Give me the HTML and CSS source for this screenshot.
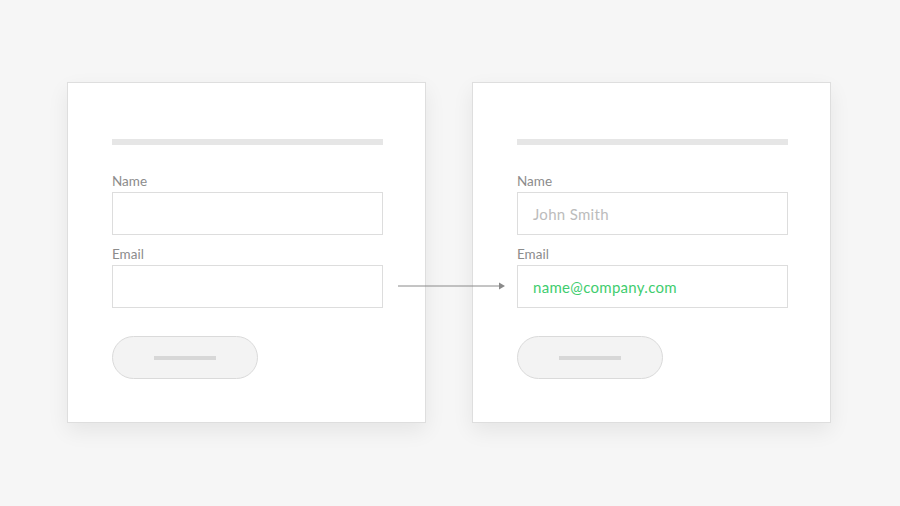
FILE: index.html
```html
<!DOCTYPE html>
<html lang="en">
<head>
    <meta charset="UTF-8">
    <title>Form fill</title>
    <link rel="stylesheet" href="styles.css">
</head>
<body>
    <div class="stage">
        <div class="card">
            <div class="title-bar"></div>
            <label class="field-label">Name</label>
            <div class="field"></div>
            <label class="field-label second">Email</label>
            <div class="field"></div>
            <div class="pill"><span></span></div>
        </div>

        <svg class="arrow" width="110" height="10" viewBox="0 0 110 10">
            <line x1="0" y1="5" x2="102" y2="5" stroke="#8a8a8a" stroke-width="1"/>
            <path d="M101 1.5 L107 5 L101 8.5 Z" fill="#8a8a8a"/>
        </svg>

        <div class="card">
            <div class="title-bar"></div>
            <label class="field-label">Name</label>
            <div class="field placeholder">John Smith</div>
            <label class="field-label second">Email</label>
            <div class="field filled">name@company.com</div>
            <div class="pill"><span></span></div>
        </div>
    </div>
</body>
</html>
```

FILE: styles.css
```css
body {
    margin: 0;
    background-color: #f6f6f6;
    font-family: 'Lato', 'Open Sans', sans-serif;
    height: 100vh;
    display: flex;
    justify-content: center;
    align-items: center;
}

.stage {
    position: relative;
    display: flex;
    gap: 46px;
    margin: 0 2px 1px 0;
}

.card {
    box-sizing: border-box;
    width: 359px;
    height: 341px;
    background-color: #ffffff;
    border: 1px solid #dedede;
    box-shadow: 0 8px 20px rgba(0, 0, 0, 0.07);
    padding: 56px 42px 0 44px;
    display: flex;
    flex-direction: column;
}

.title-bar {
    height: 6px;
    background-color: #e6e6e6;
    margin-bottom: 28px;
}

.field-label {
    font-size: 13.5px;
    line-height: 16px;
    color: #8c8c8c;
    margin-bottom: 3px;
}

.field-label.second {
    margin-top: 11px;
}

.field {
    box-sizing: border-box;
    height: 43px;
    border: 1px solid #dddddd;
    padding: 0 15px;
    display: flex;
    align-items: center;
    font-size: 15px;
    letter-spacing: 0.3px;
}

.field.placeholder {
    color: #bcbcbc;
}

.field.filled {
    color: #3fcd6e;
}

.pill {
    box-sizing: border-box;
    margin-top: 28px;
    width: 146px;
    height: 43px;
    border: 1px solid #dadada;
    border-radius: 22px;
    background-color: #f3f3f3;
    display: flex;
    justify-content: center;
    align-items: center;
}

.pill span {
    width: 62px;
    height: 4px;
    background-color: #d7d7d7;
}

.arrow {
    position: absolute;
    left: 331px;
    top: 199px;
}
```
